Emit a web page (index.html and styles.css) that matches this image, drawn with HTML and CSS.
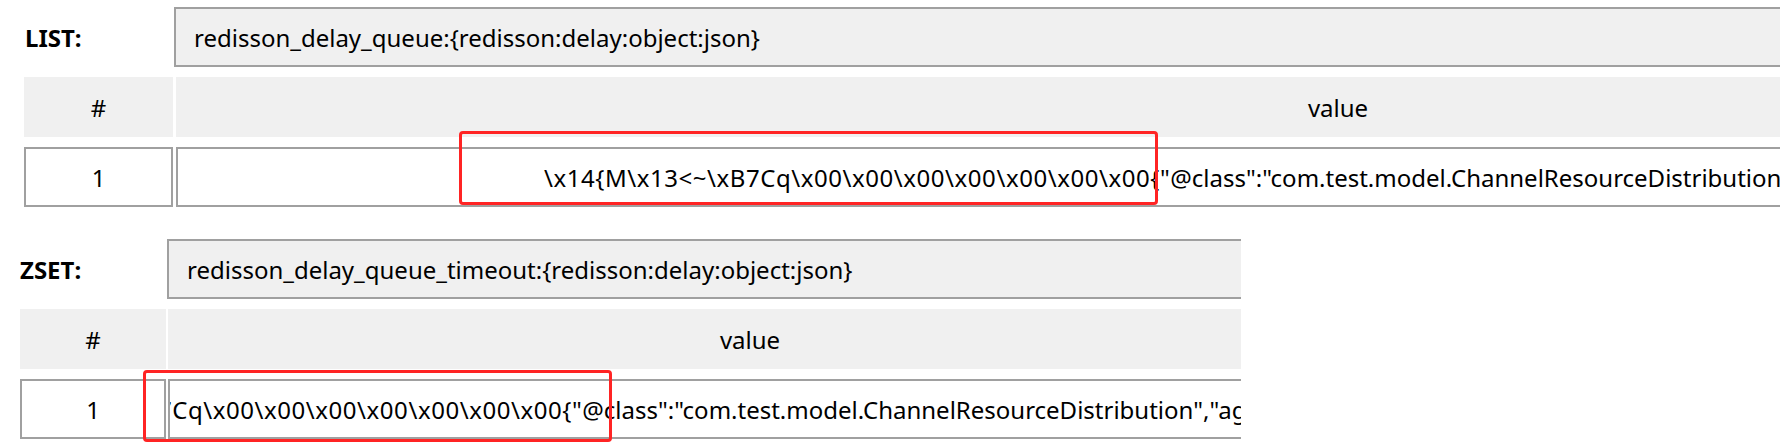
FILE: index.html
```html
<!DOCTYPE html>
<html lang="en">
<head>
    <meta charset="UTF-8">
    <title>Redisson delay queue</title>
    <link rel="stylesheet" href="styles.css">
</head>
<body>
    <div class="panel list-panel">
        <div class="key-row">
            <div class="key-label">LIST:</div>
            <div class="key-box">redisson_delay_queue:{redisson:delay:object:json}</div>
        </div>
        <div class="grid">
            <div class="head">#</div>
            <div class="head">value</div>
            <div class="cell">1</div>
            <div class="cell val"><span class="payload"><span class="raw">\x14{M\x13&lt;~\xB7Cq\x00\x00\x00\x00\x00\x00\x00{"</span>@class":"com.test.model.ChannelResourceDistribution","agentId":10001,"resourceId":20001}</span></div>
        </div>
    </div>

    <div class="panel zset-panel">
        <div class="key-row">
            <div class="key-label">ZSET:</div>
            <div class="key-box">redisson_delay_queue_timeout:{redisson:delay:object:json}</div>
        </div>
        <div class="grid">
            <div class="head">#</div>
            <div class="head">value</div>
            <div class="cell">1</div>
            <div class="cell val"><span class="payload"><span class="raw">\x14{M\x13&lt;~\xB7Cq\x00\x00\x00\x00\x00\x00\x00{"</span>@class":"com.test.model.ChannelResourceDistribution","agentId":10001,"resourceId":20001}</span></div>
        </div>
    </div>

    <!-- annotations -->
    <div class="mark mark-list"></div>
    <div class="mark mark-zset"></div>
</body>
</html>
```

FILE: styles.css
```css
body {
    margin: 0;
    width: 1780px;
    height: 446px;
    overflow: hidden;
    position: relative;
    background-color: #ffffff;
    color: #000000;
    font-family: "Noto Sans", "Open Sans", sans-serif;
    font-size: 24px;
}
.panel {
    overflow: hidden;
}
.list-panel {
    padding-top: 7px;
    width: 1780px;
}
.zset-panel {
    margin-top: 32px;
    width: 1241px;
}
.key-row {
    display: flex;
    height: 60px;
}
.key-label {
    flex: none;
    display: flex;
    align-items: center;
    font-weight: bold;
    font-size: 24px;
    box-sizing: border-box;
}
.list-panel .key-label {
    width: 174px;
    padding-left: 25px;
}
.zset-panel .key-label {
    width: 167px;
    padding-left: 20px;
}
.key-box {
    flex: none;
    width: 2400px;
    display: flex;
    align-items: center;
    padding-left: 18px;
    box-sizing: border-box;
    background-color: #f0f0f0;
    border: 2px solid #a0a0a0;
    white-space: nowrap;
}
.zset-panel .key-box {
    width: 1200px;
}
.grid {
    display: grid;
    column-gap: 3px;
    row-gap: 10px;
    margin-top: 10px;
}
.list-panel .grid {
    margin-left: 24px;
    grid-template-columns: 149px 2324px;
}
.zset-panel .grid {
    margin-left: 20px;
    column-gap: 2px;
    grid-template-columns: 146px 1164px;
}
.head {
    height: 60px;
    display: flex;
    align-items: center;
    justify-content: center;
    background-color: #f0f0f0;
}
.cell {
    height: 60px;
    box-sizing: border-box;
    display: flex;
    align-items: center;
    justify-content: center;
    border: 2px solid #a0a0a0;
    white-space: nowrap;
}
.zset-panel .cell:first-of-type {
    border-left: none;
}
.val {
    overflow: hidden;
}
.payload {
    flex: none;
    width: 1588px;
}
.raw {
    letter-spacing: 0.55px;
}
.mark {
    position: absolute;
    border: 3px solid #ff2424;
    border-radius: 4px;
}
.mark-list {
    left: 459px;
    top: 131px;
    width: 693px;
    height: 68px;
}
.mark-zset {
    left: 143px;
    top: 370px;
    width: 463px;
    height: 66px;
}
```
